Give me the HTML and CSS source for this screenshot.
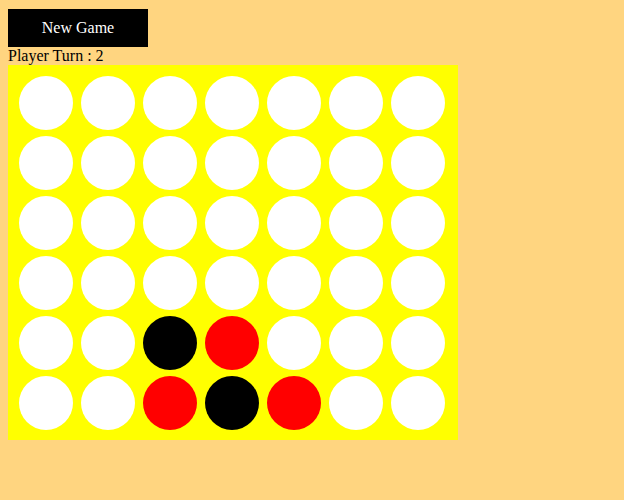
FILE: index.html
```html
<!DOCTYPE html>
<html>
<head>
<meta charset="utf-8">
<link rel="stylesheet" href="styles.css">
</head>
<body>
<div class="new-game">New Game</div>
<div class="turn">Player Turn : 2</div>
<div class="board">
  <div class="cell"></div><div class="cell"></div><div class="cell"></div><div class="cell"></div><div class="cell"></div><div class="cell"></div><div class="cell"></div>
  <div class="cell"></div><div class="cell"></div><div class="cell"></div><div class="cell"></div><div class="cell"></div><div class="cell"></div><div class="cell"></div>
  <div class="cell"></div><div class="cell"></div><div class="cell"></div><div class="cell"></div><div class="cell"></div><div class="cell"></div><div class="cell"></div>
  <div class="cell"></div><div class="cell"></div><div class="cell"></div><div class="cell"></div><div class="cell"></div><div class="cell"></div><div class="cell"></div>
  <div class="cell"></div><div class="cell"></div><div class="cell black"></div><div class="cell red"></div><div class="cell"></div><div class="cell"></div><div class="cell"></div>
  <div class="cell"></div><div class="cell"></div><div class="cell red"></div><div class="cell black"></div><div class="cell red"></div><div class="cell"></div><div class="cell"></div>
</div>
</body>
</html>
```
FILE: styles.css
```css
html, body {
  background: #ffd580;
}
body {
  margin: 8px;
  font-family: "Liberation Serif", "Times New Roman", serif;
  font-size: 16px;
  color: #000;
}
.new-game {
  margin-top: 1px;
  width: 140px;
  height: 38px;
  background: #000;
  color: #fff;
  display: flex;
  align-items: center;
  justify-content: center;
}
.turn {
  height: 18px;
  line-height: 18px;
}
.board {
  width: 450px;
  height: 375px;
  box-sizing: border-box;
  background: #ffff00;
  padding: 11px 13px 10px 11px;
  display: grid;
  grid-template-columns: repeat(7, 54px);
  grid-auto-rows: 54px;
  column-gap: 8px;
  row-gap: 6px;
}
.cell {
  width: 54px;
  height: 54px;
  border-radius: 50%;
  background: #fff;
}
.cell.red {
  background: #ff0000;
}
.cell.black {
  background: #000;
}
```
